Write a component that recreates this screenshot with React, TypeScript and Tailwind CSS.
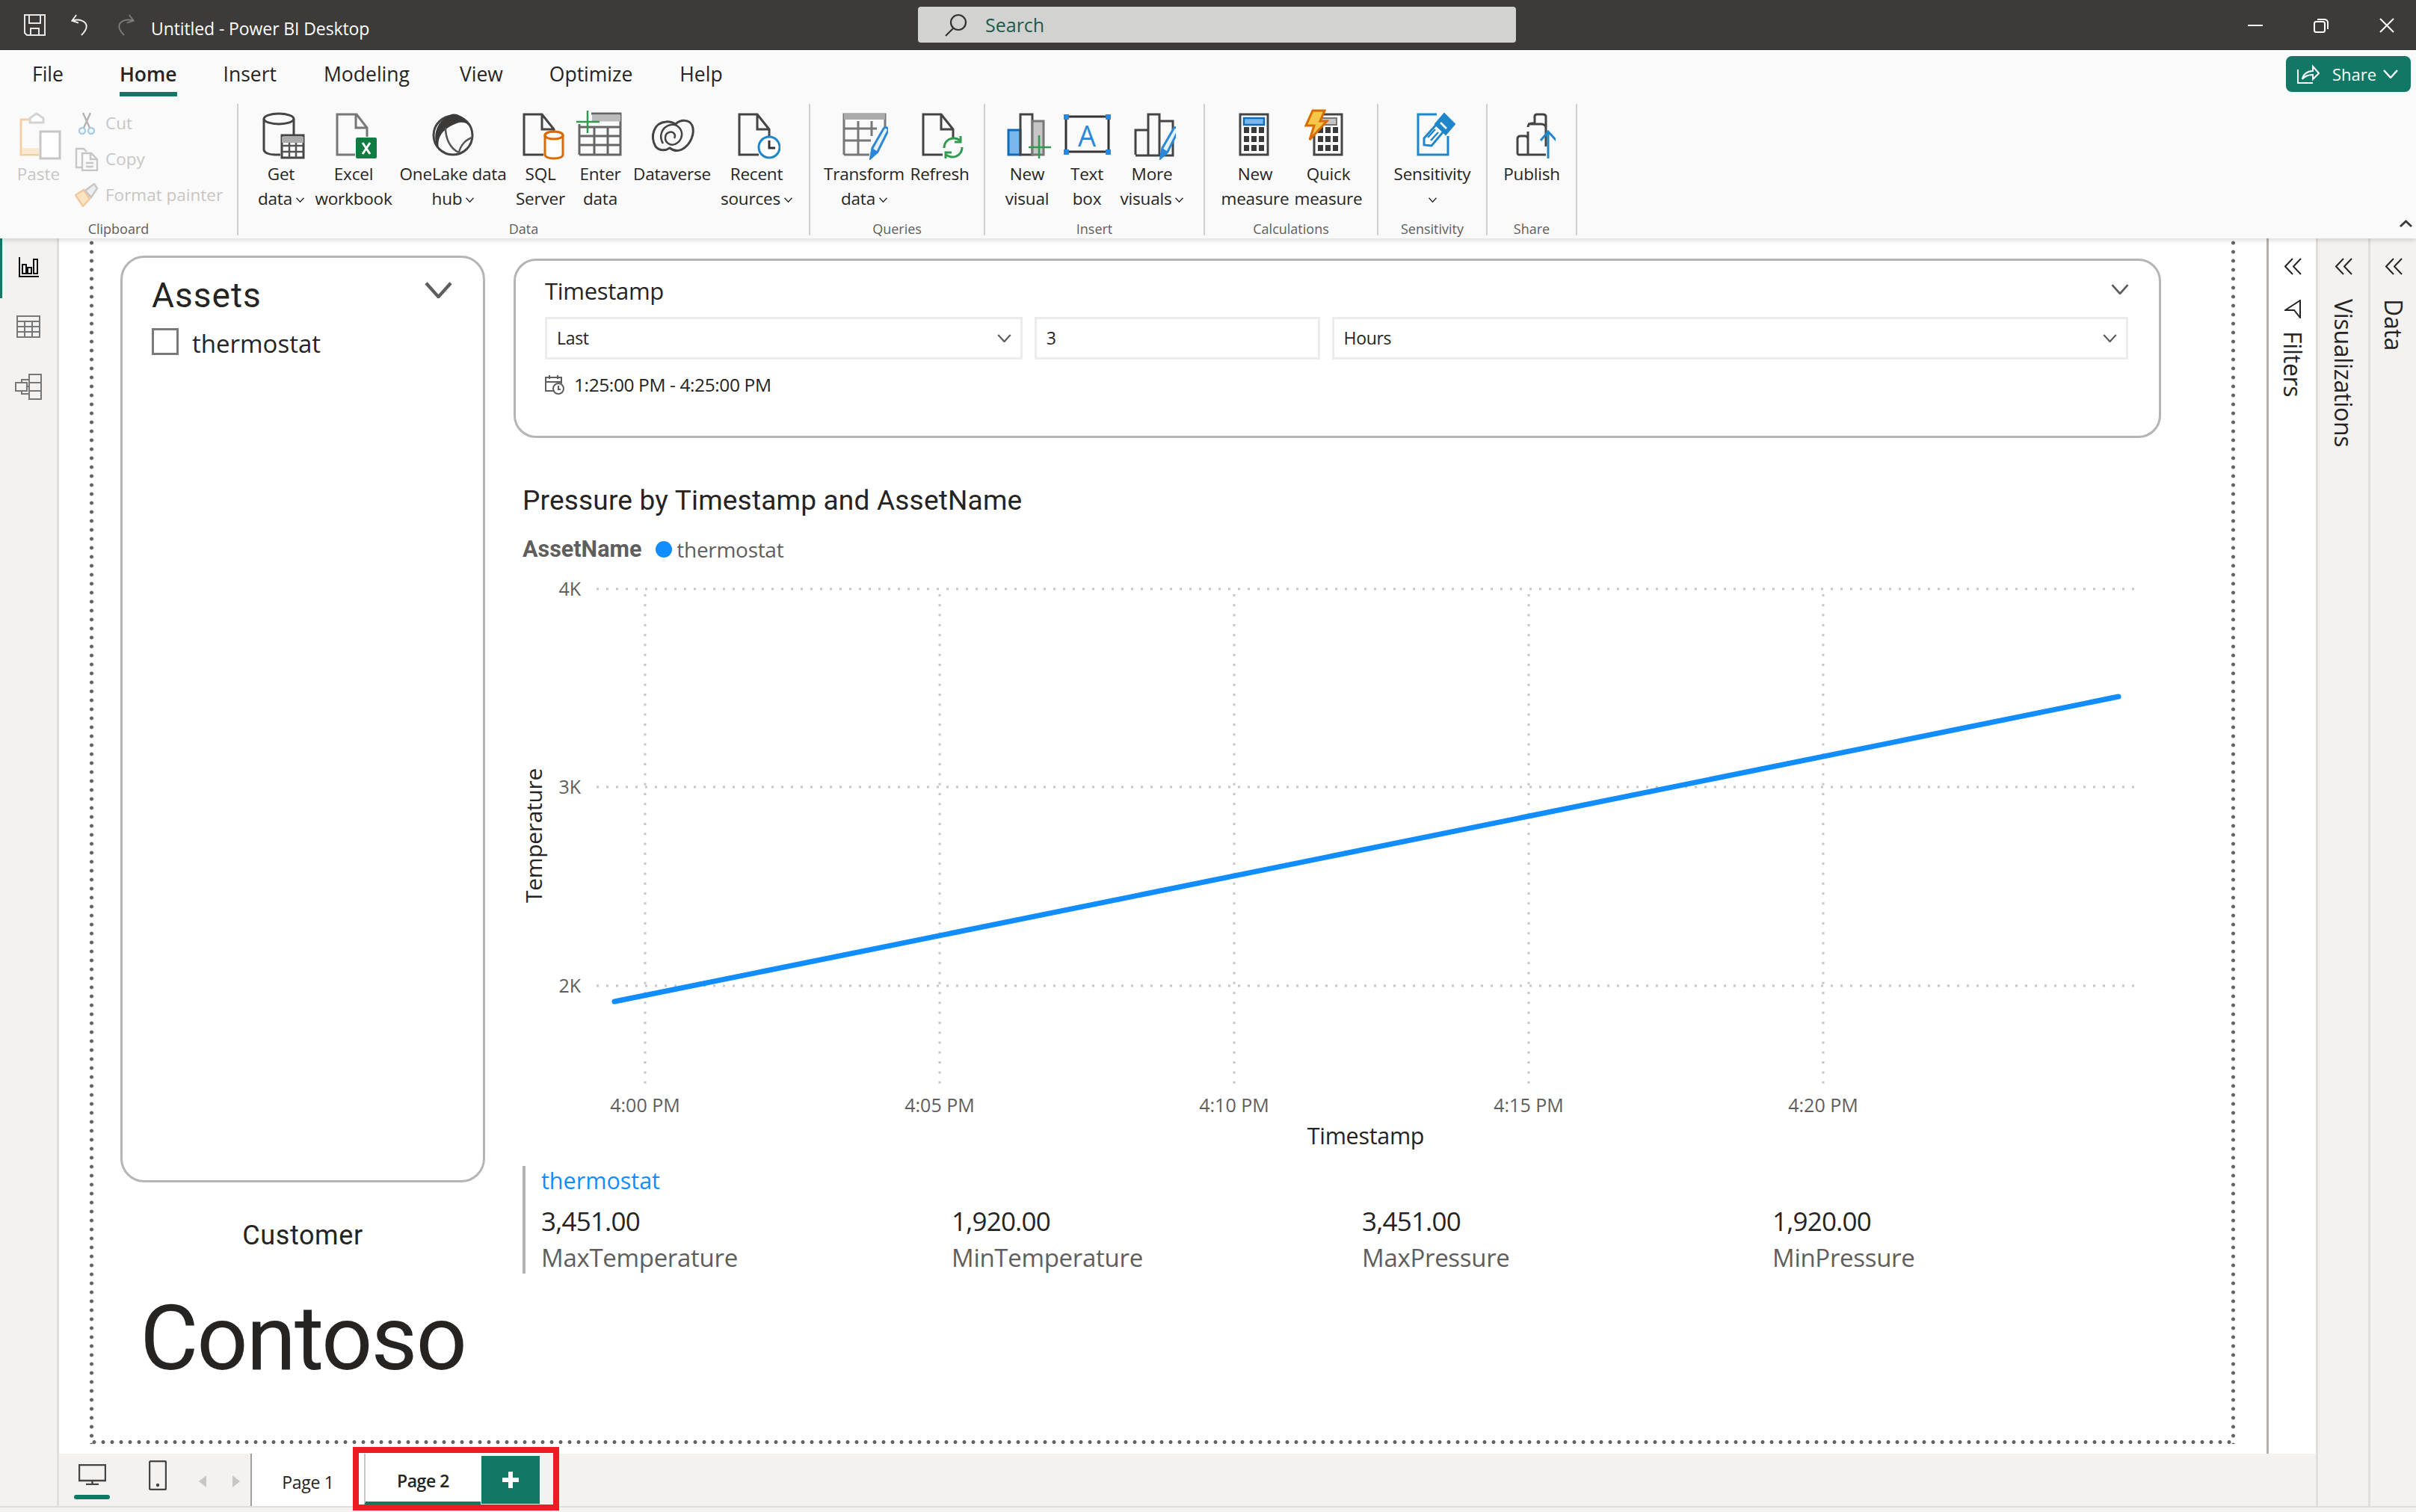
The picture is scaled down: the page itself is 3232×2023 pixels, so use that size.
import React from "react";

const din = "font-['Roboto',sans-serif]";

type IconProps = { children: React.ReactNode };

// every ribbon icon shares the same 64x68 box, centred over its label
const RibbonIcon = ({ children }: IconProps) => (
  <svg viewBox="0 0 64 68" className="w-[64px] h-[68px] shrink-0" fill="none" stroke="#444" strokeWidth="3">
    {children}
  </svg>
);

const PageTall = ({ x, color = "#444" }: { x: number; color?: string }) => (
  <path d={`M${x + 26} 61H${x}V7h24l16 20v12M${x + 24} 7v20h16`} stroke={color} fill="none" />
);

const Pencil = ({ dx = 0 }: { dx?: number }) => (
  <g transform={`translate(${dx} 0)`}>
    <path d="M44 65l2-13 15-26c2-3 7-1 6 3L53 57z" fill="#e6f1fa" stroke="#2b88d8" />
    <path d="M44 65l2-11 6 4z" fill="#2b88d8" stroke="#2b88d8" />
  </g>
);

const GetDataIcon = () => (
  <RibbonIcon>
    <ellipse cx="29" cy="13" rx="20" ry="7" />
    <path d="M9 13v41c0 4 6 7 15 7h7M49 13v21" />
    <rect x="33" y="35" width="29" height="30" fill="#fff" />
    <path d="M33 41h29" stroke="#aaa" strokeWidth="8" />
    <path d="M33 49h29M33 57h29M43 45v20M52 45v20" stroke="#555" strokeWidth="2.5" />
  </RibbonIcon>
);

const ExcelIcon = () => (
  <RibbonIcon>
    <path d="M34 61H10V7h26l14 18v12M35 7v18h15" stroke="#777" />
    <rect x="35" y="38" width="28" height="28" rx="2" fill="#107c41" stroke="none" />
    <path d="M44 45l10 15M54 45L44 60" stroke="#fff" strokeWidth="3" />
  </RibbonIcon>
);

const OneLakeIcon = () => (
  <RibbonIcon>
    <circle cx="32" cy="35" r="26" stroke="#444" />
    <path d="M30 7C12 13 1 36 14 56c-5-16 2-30 26-38 5-1 10 0 14 4C46 10 38 5 30 7z" fill="#3b3a39" stroke="none" />
    <path d="M22 25c0 14 6 28 18 33M58 38c-8 2-16 10-18 20" stroke="#555" strokeWidth="2.5" />
  </RibbonIcon>
);

const SqlIcon = () => (
  <RibbonIcon>
    <PageTall x={10} />
    <ellipse cx="50" cy="35" rx="12" ry="5" stroke="#d96b00" fill="#fff" />
    <path d="M38 35v26c0 3 5 5 12 5s12-2 12-5V35" stroke="#d96b00" fill="#fff" />
    <ellipse cx="50" cy="35" rx="12" ry="5" stroke="#d96b00" />
  </RibbonIcon>
);

const EnterDataIcon = () => (
  <RibbonIcon>
    <path d="M4 61V20M4 61h55V6H20M59 24H4M59 36H4M59 48H4M24 24v37M42 24v37" stroke="#666" />
    <path d="M21 12h38" stroke="#bbb" strokeWidth="9" />
    <path d="M15 2v30M0 17h31" stroke="#2e9b4f" strokeWidth="2.5" />
  </RibbonIcon>
);

const DataverseIcon = () => (
  <RibbonIcon>
    <path d="M10 50C2 36 8 18 24 17c5-1 9 1 13 3 6-6 18-7 22 2 4 10-2 26-14 32-6 3-12 1-16-2-6 4-14 4-19-2z" />
    <path d="M20 46c-6-10-2-22 10-25 10-2 18 8 14 18-3 7-11 11-17 7-6-4-5-13 1-15 5-2 10 3 7 8" strokeWidth="2.5" />
  </RibbonIcon>
);

const RecentIcon = () => (
  <RibbonIcon>
    <PageTall x={9} />
    <circle cx="49" cy="51" r="14" stroke="#1f87c9" fill="#fff" />
    <path d="M49 42v10h8" stroke="#333" />
  </RibbonIcon>
);

const TransformIcon = () => (
  <RibbonIcon>
    <path d="M5 61V7h55v17M5 61h34M5 26h44M5 42h36M24 16v45M42 16v20" stroke="#777" />
    <path d="M5 10h55" stroke="#aaa" strokeWidth="8" />
    <Pencil dx={-3} />
  </RibbonIcon>
);

const RefreshIcon = () => (
  <RibbonIcon>
    <PageTall x={10} />
    <path d="M38 52c0-8 6-13 13-13 3 0 6 1 8 3M62 51c0 8-6 13-13 13-3 0-6-1-8-3" stroke="#2e9b4f" />
    <path d="M60 36v8h-8M40 66v-8h8" stroke="#2e9b4f" />
  </RibbonIcon>
);

const NewVisualIcon = () => (
  <RibbonIcon>
    <rect x="7" y="28" width="16" height="33" fill="#7ab7ec" stroke="#0f6cbd" />
    <path d="M23 61V7h16v54z" />
    <path d="M39 16h15v45H39z" fill="#c8c6c4" stroke="#777" />
    <path d="M48 35v31M34 51h30" stroke="#2e9b4f" strokeWidth="2.5" />
  </RibbonIcon>
);

const TextBoxIcon = () => (
  <RibbonIcon>
    <rect x="4" y="10" width="57" height="47" stroke="#333" />
    <rect x="1" y="7" width="7" height="7" fill="#2b88d8" stroke="none" />
    <rect x="57" y="7" width="7" height="7" fill="#2b88d8" stroke="none" />
    <rect x="1" y="54" width="7" height="7" fill="#2b88d8" stroke="none" />
    <rect x="57" y="54" width="7" height="7" fill="#2b88d8" stroke="none" />
    <text x="32" y="50" textAnchor="middle" fontSize="38" fontFamily="'Open Sans',sans-serif" fill="#2b88d8" stroke="none">A</text>
  </RibbonIcon>
);

const MoreVisualsIcon = () => (
  <RibbonIcon>
    <path d="M10 61V28h17M27 61V7h15v55M42 16h18v46H10" />
    <Pencil />
  </RibbonIcon>
);

const CalcBody = ({ x }: { x: number }) => (
  <g>
    <rect x={x} y="7" width="37" height="54" stroke="#444" fill="#fff" />
    {[24, 36, 48].map((y) =>
      [5, 15, 25].map((dx) => <rect key={`${y}-${dx}`} x={x + dx} y={y} width="7" height="8" fill="#3b3a39" stroke="none" />)
    )}
  </g>
);

const NewMeasureIcon = () => (
  <RibbonIcon>
    <CalcBody x={12} />
    <rect x="17" y="12" width="27" height="9" fill="#7ab7ec" stroke="#0f6cbd" strokeWidth="2.5" />
  </RibbonIcon>
);

const QuickMeasureIcon = () => (
  <RibbonIcon>
    <CalcBody x={13} />
    <path d="M19 12h24v9H19z" fill="#c8c6c4" stroke="#777" strokeWidth="2" />
    <path d="M11 2h16l-6 14h9L7 41l6-19H2z" fill="#f5c648" stroke="#d96b00" />
  </RibbonIcon>
);

const SensitivityIcon = () => (
  <RibbonIcon>
    <path d="M38 7H13v54h40V36" stroke="#1f87c9" />
    <path d="M21 39l16-18 10 9-16 19-10-1z" stroke="#1f87c9" fill="#fff" />
    <path d="M26 38l10-11M30 42l10-11" stroke="#1f87c9" strokeWidth="2.5" />
    <path d="M36 20l12-14 14 14-12 14z" fill="#1f87c9" stroke="#1f87c9" strokeWidth="2" />
    <path d="M43 18l8 8" stroke="#fff" strokeWidth="2.5" />
  </RibbonIcon>
);

const PublishIcon = () => (
  <RibbonIcon>
    <path d="M13 40c0-3 2-4 4-4h6c2 0 4 1 4 4v21H15c-1 0-2-1-2-2zM27 24c0-3 2-5 5-5h4V10c0-2 1-3 3-3h8c2 0 4 1 4 3v40M27 30V61h24M27 20h18c3 0 6 2 6 5" />
    <path d="M54 66V30M44 42l10-12 11 12" stroke="#1f87c9" />
  </RibbonIcon>
);

const Chevron = ({ className }: { className: string }) => (
  <svg viewBox="0 0 20 12" fill="none" stroke="currentColor" strokeWidth="2.4" className={className}>
    <path d="M1 1l9 10 9-10" />
  </svg>
);

const RibbonButton = ({
  className,
  icon,
  top,
  bottom,
  chevron,
}: {
  className: string;
  icon: React.ReactNode;
  top: string;
  bottom?: string;
  chevron?: boolean;
}) => (
  <div className={`flex flex-col items-center pt-[7px] text-[22.5px] leading-[33px] tracking-[-0.2px] text-[#252423] ${className}`}>
    {icon}
    <div className="mt-[2px] whitespace-nowrap">{top}</div>
    <div className="flex items-center gap-[5px] whitespace-nowrap h-[33px]">
      {bottom}
      {chevron && <Chevron className="w-[11px] h-[7px] mt-[3px]" />}
    </div>
  </div>
);

const Group = ({
  className,
  rowClass = "",
  label,
  children,
}: {
  className: string;
  rowClass?: string;
  label: string;
  children: React.ReactNode;
}) => (
  <div className={`flex flex-col h-[176px] shrink-0 border-r-[2px] border-[#d2d0ce] ${className}`}>
    <div className={`flex h-[156px] ${rowClass}`}>{children}</div>
    <div className="h-[20px] text-center text-[18px] leading-[22px] text-[#605e5c]">{label}</div>
  </div>
);

const PasteIcon = () => (
  <svg viewBox="0 0 60 68" className="w-[60px] h-[68px]" fill="none" strokeWidth="3">
    <path d="M18 14H6v47h24" stroke="#f2cfa6" />
    <path d="M8 56h22" stroke="#fbe9cf" strokeWidth="8" />
    <path d="M18 18v-6l9-6 9 6v6z" stroke="#d6d4d2" fill="#fff" />
    <rect x="32" y="30" width="26" height="36" stroke="#c8c6c4" fill="#fff" />
  </svg>
);

const CutIcon = () => (
  <svg viewBox="0 0 32 32" className="w-[32px] h-[32px]" fill="none" strokeWidth="2.4">
    <path d="M11 2l9 20M21 2l-9 20" stroke="#b5b3b1" />
    <circle cx="10" cy="26" r="4" stroke="#a6cde8" />
    <circle cx="22" cy="26" r="4" stroke="#a6cde8" />
  </svg>
);

const CopyIcon = () => (
  <svg viewBox="0 0 32 32" className="w-[32px] h-[32px]" fill="none" stroke="#c8c6c4" strokeWidth="2.4">
    <path d="M10 27H2V2h10l4 4" />
    <path d="M10 8h12l8 8v15H10zM21 8v8h9M15 21h10M15 26h10" />
  </svg>
);

const PainterIcon = () => (
  <svg viewBox="0 0 32 32" className="w-[32px] h-[32px]" fill="none" strokeWidth="2.4">
    <path d="M1 16l10 15 9-10-8-12z" fill="#fbe3c4" stroke="#f2c89a" />
    <path d="M14 10l8 9 8-12-4-6z" fill="#eeeded" stroke="#c8c6c4" />
  </svg>
);

const TitleBar = () => (
  <div className="flex h-[67px] shrink-0 bg-[#3c3b39] text-white">
    <div className="flex w-[1228px] shrink-0 items-center pl-[32px]">
      <svg viewBox="0 0 29 29" className="w-[29px] h-[29px]" fill="none" stroke="#e8e8e8" strokeWidth="2">
        <path d="M1 1h27v27H4l-3-3zM7 1v11h15V1M9 28v-9h11v9" />
      </svg>
      <svg viewBox="0 0 26 30" className="ml-[33px] w-[26px] h-[29px]" fill="none" stroke="#f0f0f0" strokeWidth="2">
        <path d="M8 1L2 9l9 3M3 9c8-3 19 0 19 8 0 4-5 10-7 12" />
      </svg>
      <svg viewBox="0 0 26 30" className="ml-[35px] w-[26px] h-[29px]" fill="none" stroke="#7d7c7a" strokeWidth="2">
        <path d="M18 1l6 8-9 3M23 9C15 6 4 9 4 17c0 4 5 10 7 12" />
      </svg>
      <span className="ml-[21px] mt-[10px] text-[23px] tracking-[-0.1px] whitespace-nowrap">Untitled - Power BI Desktop</span>
    </div>
    <div className="mt-[9px] flex h-[48px] w-[800px] shrink-0 items-center rounded-[4px] bg-[#d2d2d0] pl-[35px]">
      <svg viewBox="0 0 31 31" className="w-[31px] h-[31px]" fill="none" stroke="#323130" strokeWidth="2.2">
        <circle cx="19" cy="12" r="10" />
        <path d="M12 20L2 30" />
      </svg>
      <span className="ml-[24px] pt-[2px] text-[25px] text-[#1f5a4e]">Search</span>
    </div>
    <div className="flex flex-1 items-center justify-end gap-[68px] pr-[29px]">
      <div className="h-[2px] w-[20px] bg-white" />
      <svg viewBox="0 0 20 20" className="w-[20px] h-[20px]" fill="none" stroke="#fff" strokeWidth="2">
        <rect x="1" y="5" width="14" height="14" rx="2.5" />
        <path d="M5 2h10c2 0 4 2 4 4v9" />
      </svg>
      <svg viewBox="0 0 20 20" className="w-[20px] h-[20px]" fill="none" stroke="#fff" strokeWidth="2">
        <path d="M1 1l18 18M19 1L1 19" />
      </svg>
    </div>
  </div>
);

const Ribbon = () => (
  <div className="relative z-10 flex h-[252px] shrink-0 flex-col bg-[#fafafa] shadow-[0_2px_7px_rgba(0,0,0,0.16)]">
    <div className="flex h-[63px] shrink-0 text-[26.5px] text-[#252423]">
      <div className="ml-[43px] pt-[14px] leading-[36px]">File</div>
      <div className="ml-[75px] flex h-[62px] flex-col items-center pt-[14px] font-semibold leading-[36px] border-b-[6px] border-[#117865]">Home</div>
      <div className="ml-[62px] pt-[14px] leading-[36px]">Insert</div>
      <div className="ml-[63px] pt-[14px] leading-[36px]">Modeling</div>
      <div className="ml-[67px] pt-[14px] leading-[36px]">View</div>
      <div className="ml-[62px] pt-[14px] leading-[36px]">Optimize</div>
      <div className="ml-[63px] pt-[14px] leading-[36px]">Help</div>
      <div className="ml-auto mr-[7px] mt-[8px] flex h-[48px] w-[167px] items-center rounded-[8px] bg-[#117865] pl-[14px] text-[22px] text-white">
        <svg viewBox="0 0 31 28" className="w-[31px] h-[28px]" fill="none" stroke="#fff" strokeWidth="2">
          <path d="M22 26H2V8M8 21c1-7 7-11 14-11V4l8 9-8 8v-6c-6 0-11 2-14 6z" />
        </svg>
        <span className="ml-[17px]">Share</span>
        <Chevron className="ml-[9px] w-[20px] h-[12px]" />
      </div>
    </div>
    <div className="mt-[9px] flex">
      <Group className="w-[319px]" label="Clipboard">
        <div className="ml-[3px] flex w-[97px] flex-col items-center pt-[7px] text-[22.5px] leading-[33px] text-[#c8c6c4]">
          <PasteIcon />
          <div className="mt-[2px]">Paste</div>
        </div>
        <div className="flex flex-col pt-[2px] text-[22.5px] leading-[48px] text-[#c8c6c4]">
          <div className="flex h-[48px] items-center gap-[9px]"><CutIcon />Cut</div>
          <div className="flex h-[48px] items-center gap-[9px]"><CopyIcon />Copy</div>
          <div className="flex h-[48px] items-center gap-[9px] whitespace-nowrap"><PainterIcon />Format painter</div>
        </div>
      </Group>
      <Group className="w-[765px]" rowClass="pl-[11px]" label="Data">
        <RibbonButton className="w-[92px]" icon={<GetDataIcon />} top="Get" bottom="data" chevron />
        <RibbonButton className="w-[102px]" icon={<ExcelIcon />} top="Excel" bottom="workbook" />
        <RibbonButton className="w-[164px]" icon={<OneLakeIcon />} top="OneLake data" bottom="hub" chevron />
        <RibbonButton className="w-[70px]" icon={<SqlIcon />} top="SQL" bottom="Server" />
        <RibbonButton className="w-[90px]" icon={<EnterDataIcon />} top="Enter" bottom="data" />
        <RibbonButton className="w-[102px]" icon={<DataverseIcon />} top="Dataverse" />
        <RibbonButton className="w-[124px]" icon={<RecentIcon />} top="Recent" bottom="sources" chevron />
      </Group>
      <Group className="w-[234px]" rowClass="pl-[15px]" label="Queries">
        <RibbonButton className="w-[114px]" icon={<TransformIcon />} top="Transform" bottom="data" chevron />
        <RibbonButton className="w-[88px]" icon={<RefreshIcon />} top="Refresh" />
      </Group>
      <Group className="w-[294px]" rowClass="pl-[16px]" label="Insert">
        <RibbonButton className="w-[80px]" icon={<NewVisualIcon />} top="New" bottom="visual" />
        <RibbonButton className="w-[80px]" icon={<TextBoxIcon />} top="Text" bottom="box" />
        <RibbonButton className="w-[94px]" icon={<MoreVisualsIcon />} top="More" bottom="visuals" chevron />
      </Group>
      <Group className="w-[232px]" rowClass="pl-[17px]" label="Calculations">
        <RibbonButton className="w-[100px]" icon={<NewMeasureIcon />} top="New" bottom="measure" />
        <RibbonButton className="w-[96px]" icon={<QuickMeasureIcon />} top="Quick" bottom="measure" />
      </Group>
      <Group className="w-[146px]" label="Sensitivity">
        <RibbonButton className="w-full" icon={<SensitivityIcon />} top="Sensitivity" chevron />
      </Group>
      <Group className="w-[120px]" label="Share">
        <RibbonButton className="w-full" icon={<PublishIcon />} top="Publish" />
      </Group>
      <div className="ml-auto mr-[5px] mt-[155px] h-[10px] w-[17px] text-[#3b3a39]">
        <svg viewBox="0 0 17 10" className="w-[17px] h-[10px]" fill="none" stroke="currentColor" strokeWidth="2.8">
          <path d="M1 9l7.500-7 7.500 7" />
        </svg>
      </div>
    </div>
  </div>
);

const LeftRail = () => (
  <div className="flex w-[79px] shrink-0 flex-col border-r-[3px] border-[#e1dfdd] bg-[#f3f2f1]">
    <div className="flex h-[80px] items-center justify-center border-l-[3px] border-[#117865] pb-[4px] pr-[3px]">
      <svg viewBox="0 0 27 27" className="w-[27px] h-[27px]" fill="none" stroke="#111" strokeWidth="2">
        <path d="M1 0v26h26M5 10h5v12H5zM12 14h5v8h-5zM20 3h5v19h-5z" />
      </svg>
    </div>
    <div className="flex h-[80px] items-center justify-center pb-[4px]">
      <svg viewBox="0 0 32 30" className="w-[32px] h-[30px]" fill="none" stroke="#777" strokeWidth="2">
        <path d="M1 1h30v28H1zM1 8h30M1 15h30M1 22h30M11 8v21M21 8v21" />
      </svg>
    </div>
    <div className="flex h-[80px] items-center justify-center pb-[4px]">
      <svg viewBox="0 0 36 35" className="w-[36px] h-[35px]" fill="none" stroke="#777" strokeWidth="2">
        <path d="M19 1h16v11H19zM1 12h15v11H1zM19 23h16v11H19zM19 12h16v11H19zM16 17h3M9 12V8h10M9 23v4h10" />
      </svg>
    </div>
  </div>
);

const AssetsCard = () => (
  <div className="h-[1240px] w-[488px] shrink-0 rounded-[32px] border-[3px] border-[#b5b5b5] pl-[39px] pr-[40px] pt-[22px]">
    <div className="flex items-center justify-between">
      <span className={`${din} text-[46px] leading-[56px] tracking-[1px] text-[#252423]`}>Assets</span>
      <Chevron className="mb-[14px] w-[39px] h-[22px] text-[#605e5c]" />
    </div>
    <div className="mt-[16px] flex items-start">
      <div className="h-[36px] w-[36px] border-[3px] border-[#7a7a7a]" />
      <span className="ml-[18px] mt-[-2px] text-[33px] leading-[46px] text-[#252423]">thermostat</span>
    </div>
  </div>
);

const Dropdown = ({ className, value, chevron }: { className: string; value: string; chevron?: boolean }) => (
  <div className={`flex h-[57px] items-center justify-between border-[3px] border-[#ececec] pl-[13px] pr-[12px] text-[23px] tracking-[-0.3px] text-[#252423] ${className}`}>
    <span>{value}</span>
    {chevron && <Chevron className="w-[19px] h-[11px] text-[#605e5c]" />}
  </div>
);

const TimestampCard = () => (
  <div className="h-[240px] w-[2204px] rounded-[30px] border-[3px] border-[#b5b5b5] pl-[39px] pr-[41px] pt-[18px]">
    <div className="flex h-[44px] items-center justify-between">
      <span className="text-[31px] text-[#252423] tracking-[-0.3px]">Timestamp</span>
      <Chevron className="mr-[-2px] mb-[4px] w-[26px] h-[14px] text-[#605e5c]" />
    </div>
    <div className="mt-[13px] flex gap-[16px]">
      <Dropdown className="w-[639px]" value="Last" chevron />
      <Dropdown className="w-[382px]" value="3" />
      <Dropdown className="w-[1066px]" value="Hours" chevron />
    </div>
    <div className="mt-[20px] flex items-center text-[24.5px] leading-[26px] tracking-[-0.4px] text-[#252423]">
      <svg viewBox="0 0 26 27" className="w-[26px] h-[27px]" fill="none" stroke="#605e5c" strokeWidth="2">
        <path d="M13 22H1V4h21v8M1 10h21M6 1v5M17 1v5" />
        <circle cx="18" cy="19" r="7" fill="#fff" />
        <path d="M18 15v5h3" />
      </svg>
      <span className="ml-[13px]">1:25:00 PM - 4:25:00 PM</span>
    </div>
  </div>
);

const gridX = [863, 1257, 1651, 2045, 2439];
const gridLabels = ["4:00 PM", "4:05 PM", "4:10 PM", "4:15 PM", "4:20 PM"];
const gridY = [
  { y: 788, label: "4K" },
  { y: 1053, label: "3K" },
  { y: 1319, label: "2K" },
];

const Chart = () => (
  <svg viewBox="699 752 2192 800" className="h-[800px] w-[2192px]" fontFamily="'Open Sans',sans-serif">
    {gridY.map((g) => (
      <g key={g.label}>
        <line x1="798" x2="2858" y1={g.y} y2={g.y} stroke="#c8c6c4" strokeWidth="3" strokeDasharray="3 10" />
        <text x="777" y={g.y + 9} textAnchor="end" fontSize="25" fill="#605e5c">{g.label}</text>
      </g>
    ))}
    {gridX.map((x, i) => (
      <g key={x}>
        <line x1={x} x2={x} y1="795" y2="1455" stroke="#c8c6c4" strokeWidth="3" strokeDasharray="3 10.3" />
        <text x={x} y="1488" textAnchor="middle" fontSize="25" fill="#605e5c">{gridLabels[i]}</text>
      </g>
    ))}
    <line x1="822" y1="1340" x2="2834" y2="932" stroke="#118dff" strokeWidth="7" strokeLinecap="round" />
    <text x="1827" y="1531" textAnchor="middle" fontSize="30.5" letterSpacing="-0.3" fill="#252423">Timestamp</text>
    <text x="725" y="1118" textAnchor="middle" fontSize="30" letterSpacing="-0.3" fill="#252423" transform="rotate(-90 725 1118)">Temperature</text>
  </svg>
);

const kpis = [
  { value: "3,451.00", label: "MaxTemperature" },
  { value: "1,920.00", label: "MinTemperature" },
  { value: "3,451.00", label: "MaxPressure" },
  { value: "1,920.00", label: "MinPressure" },
];

const KpiCard = () => (
  <div className="mt-[8px] h-[144px] border-l-[4px] border-[#b3b3b3] pl-[21px] pt-[2px]">
    <div className="text-[30.5px] leading-[34px] text-[#118dff]">thermostat</div>
    <div className="mt-[16px] grid grid-cols-[549px_549px_549px_549px]">
      {kpis.map((k, i) => (
        <div key={i}>
          <div className="text-[35px] leading-[44px] tracking-[-0.8px] text-[#252423]">{k.value}</div>
          <div className="mt-[7px] text-[33px] leading-[40px] tracking-[-0.3px] text-[#605e5c]">{k.label}</div>
        </div>
      ))}
    </div>
  </div>
);

const ReportFrame = () => (
  <div className="flex h-[1613px] w-[2870px] pt-[23px] pl-[41px] [background:radial-gradient(circle,#666_2.2px,transparent_2.8px)_left_top/5px_12px_repeat-y,radial-gradient(circle,#666_2.2px,transparent_2.8px)_right_top/5px_12px_repeat-y,radial-gradient(circle,#666_2.2px,transparent_2.8px)_left_bottom/12px_5px_repeat-x]">
    <div className="flex w-[488px] shrink-0 flex-col items-center">
      <AssetsCard />
      <div className={`${din} mt-[53px] text-[36px] leading-[36px] tracking-[0.6px] text-[#252423]`}>Customer</div>
      <div className={`${din} mt-[50px] text-[120px] leading-[140px] tracking-[-2px] text-[#252423]`}>Contoso</div>
    </div>
    <div className="ml-[38px] mt-[4px] flex flex-col">
      <TimestampCard />
      <div className="ml-[12px] flex flex-col">
        <div className={`${din} mt-[62px] text-[37px] leading-[44px] tracking-[0.2px] text-[#252423]`}>Pressure by Timestamp and AssetName</div>
        <div className="mt-[26px] flex h-[34px] items-center text-[#605e5c]">
          <span className={`${din} font-bold text-[30.5px]`}>AssetName</span>
          <div className="ml-[19px] h-[22px] w-[22px] rounded-full bg-[#118dff]" />
          <span className="ml-[6px] text-[28px] tracking-[-0.3px]">thermostat</span>
        </div>
        <Chart />
        <KpiCard />
      </div>
    </div>
  </div>
);

const PageBar = () => (
  <div className="relative z-10 flex h-[70px] shrink-0 bg-[#f3f2f1]">
    <div className="ml-[20px] flex w-[48px] flex-col items-center pt-[14px]">
      <svg viewBox="0 0 37 28" className="w-[37px] h-[28px]" fill="none" stroke="#444" strokeWidth="2.4">
        <path d="M1 1h35v21H1zM18.500 22v5M10 27h17" />
      </svg>
      <div className="mt-[13px] h-[6px] w-[48px] rounded-full bg-[#117865]" />
    </div>
    <div className="ml-[52px] pt-[9px]">
      <svg viewBox="0 0 24 40" className="w-[24px] h-[40px]" fill="none" stroke="#444" strokeWidth="2.4">
        <rect x="1" y="1" width="22" height="38" rx="2" />
        <circle cx="12" cy="33" r="1" fill="#444" />
      </svg>
    </div>
    <div className="ml-[43px] flex items-center gap-[35px] pt-[4px]">
      <div className="h-0 w-0 border-y-[8px] border-r-[10px] border-y-transparent border-r-[#c8c6c4]" />
      <div className="h-0 w-0 border-y-[8px] border-l-[10px] border-y-transparent border-l-[#c8c6c4]" />
    </div>
    <div className="ml-[14px] flex h-full w-[152px] items-center justify-center border-l-[2px] border-[#a19f9d] bg-white pt-[6px] text-[23px] tracking-[-0.3px] text-[#252423]">Page 1</div>
    <div className="flex h-full w-[156px] items-center justify-center border-b-[6px] border-l-[2px] border-b-[#117865] border-l-[#c8c6c4] bg-white pt-[8px] text-[23px] font-semibold tracking-[-0.4px] text-[#252423]">Page 2</div>
    <div className="ml-[1px] mt-[3px] flex h-[64px] w-[78px] items-center justify-center bg-[#117865]">
      <svg viewBox="0 0 22 22" className="w-[22px] h-[22px]" fill="none" stroke="#fff" strokeWidth="6">
        <path d="M11 0v22M0 11h22" />
      </svg>
    </div>
    <div className="absolute left-[393px] top-[-9px] h-[85px] w-[276px] border-[8px] border-[#ed1c24]" />
  </div>
);

const SidePane = ({ className, label, icon }: { className: string; label: string; icon?: React.ReactNode }) => (
  <div className={`flex shrink-0 flex-col items-center pt-[26px] ${className}`}>
    <svg viewBox="0 0 24 23" className="w-[24px] h-[23px]" fill="none" stroke="#252423" strokeWidth="2">
      <path d="M12 1L2 11.500 12 22M23 1L13 11.500 23 22" />
    </svg>
    {icon}
    <span className="text-[32px] leading-[38px] tracking-[-0.3px] text-[#252423] [writing-mode:vertical-rl]">{label}</span>
  </div>
);

export default function App() {
  return (
    <div className="flex h-screen w-full flex-col overflow-hidden bg-white font-['Open_Sans',sans-serif]">
      <TitleBar />
      <Ribbon />
      <div className="flex min-h-0 flex-1">
        <LeftRail />
        <div className="flex min-w-0 flex-1 flex-col">
          <div className="flex h-[1626px] shrink-0">
            <div className="flex-1 overflow-hidden pl-[41px]">
              <ReportFrame />
            </div>
            <SidePane
              className="w-[66px] border-l-[3px] border-[#b3b0ad]"
              label="Filters"
              icon={
                <svg viewBox="0 0 22 25" className="mb-[17px] mt-[33px] w-[22px] h-[25px]" fill="none" stroke="#252423" strokeWidth="2">
                  <path d="M21 1v23l-8-10H1z" />
                </svg>
              }
            />
          </div>
          <PageBar />
        </div>
        <SidePane className="w-[70px] gap-[32px] border-l-[3px] border-[#e1dfdd] bg-[#f3f2f1]" label="Visualizations" />
        <SidePane className="w-[64px] gap-[32px] border-l-[3px] border-[#e1dfdd] bg-[#f3f2f1]" label="Data" />
      </div>
      <div className="h-[8px] shrink-0 border-t-[2px] border-[#e1dfdd] bg-[#f3f2f1]" />
    </div>
  );
}
